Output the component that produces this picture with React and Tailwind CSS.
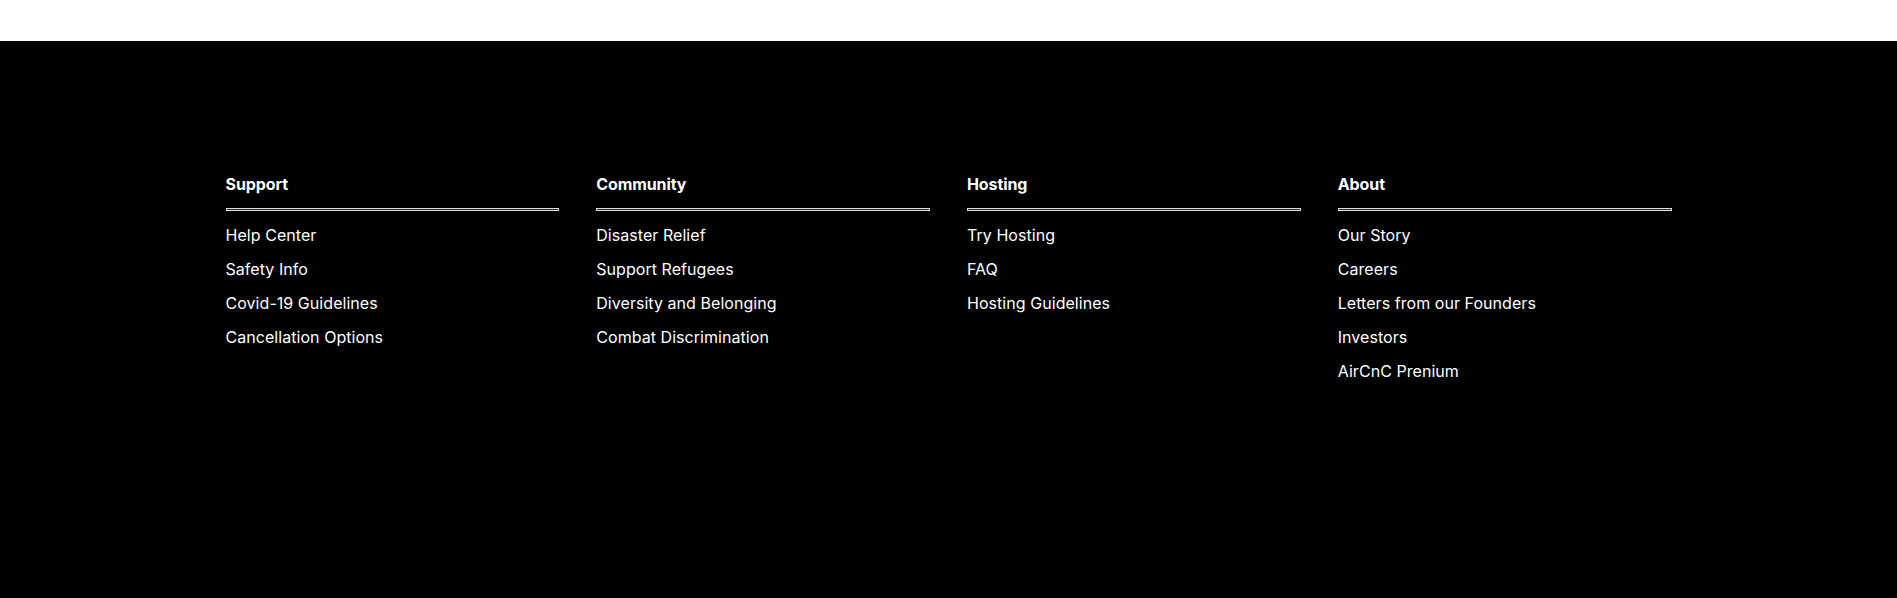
import React from "react";

const columns = [
  { title: "Support", links: ["Help Center", "Safety Info", "Covid-19 Guidelines", "Cancellation Options"] },
  { title: "Community", links: ["Disaster Relief", "Support Refugees", "Diversity and Belonging", "Combat Discrimination"] },
  { title: "Hosting", links: ["Try Hosting", "FAQ", "Hosting Guidelines"] },
  { title: "About", links: ["Our Story", "Careers", "Letters from our Founders", "Investors", "AirCnC Prenium"] },
];

export default function App() {
  return (
    <div className="w-full bg-white font-['Inter','Liberation_Sans',sans-serif]">
      <div className="h-[41px] bg-white" />
      <footer className="h-[557px] bg-black pt-[131px]">
        <div className="mx-auto grid w-[1446px] grid-cols-4 gap-x-[37px]">
          {columns.map((col) => (
            <div key={col.title} className="flex flex-col">
              <h3 className="text-[16px] font-bold leading-6 tracking-[-0.1px] text-white">{col.title}</h3>
              <div className="mt-[12px] h-[3px] border border-[#dedede] bg-[#2a2a2a]" />
              <ul className="mt-[12px] flex flex-col gap-[10px]">
                {col.links.map((l) => (
                  <li key={l} className="text-[16px] leading-6 tracking-[0.05px] text-white">
                    <a href="#">{l}</a>
                  </li>
                ))}
              </ul>
            </div>
          ))}
        </div>
      </footer>
    </div>
  );
}
